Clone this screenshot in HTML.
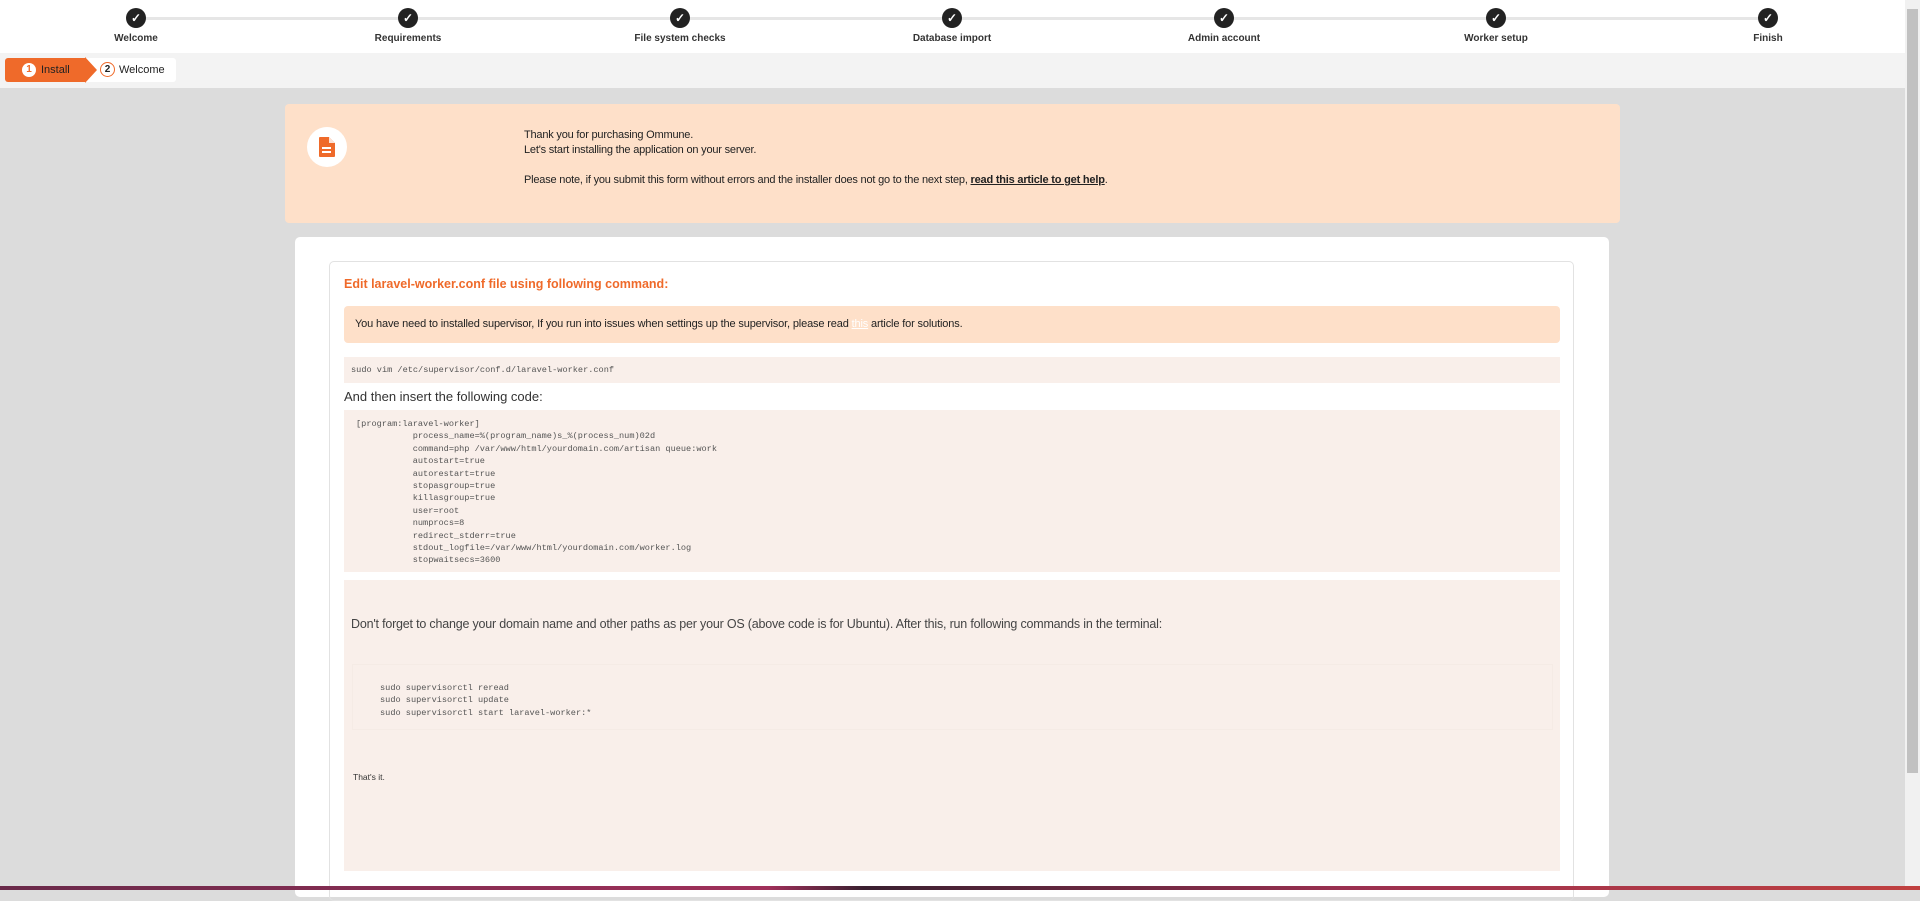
<!DOCTYPE html>
<html><head><meta charset="utf-8"><style>
*{margin:0;padding:0;box-sizing:border-box}
body{width:1920px;height:890px;overflow:hidden;background:#dcdcdc;font-family:"Liberation Sans",Arial,sans-serif;position:relative;color:#222}
.a{position:absolute}
.top{left:0;top:0;width:1905px;height:53px;background:#fff}
.line{left:136px;top:17px;width:1632px;height:3px;background:#e6e6e6}
.step{position:absolute;top:8px;width:160px;margin-left:-80px;text-align:center;font-size:10px;font-weight:bold;color:#333}
.step .c{width:20px;height:20px;border-radius:50%;background:#222;margin:0 auto 5px;color:#fff;font-size:12px;line-height:20px}
.crumb{left:0;top:53px;width:1905px;height:35px;background:#f3f3f3}
.mono{font-family:"Liberation Mono",monospace;color:#555}
</style></head><body>
<div class="a top"></div>
<div class="a line"></div>
<div class="step" style="left:136px"><div class="c">✓</div>Welcome</div>
<div class="step" style="left:408px"><div class="c">✓</div>Requirements</div>
<div class="step" style="left:680px"><div class="c">✓</div>File system checks</div>
<div class="step" style="left:952px"><div class="c">✓</div>Database import</div>
<div class="step" style="left:1224px"><div class="c">✓</div>Admin account</div>
<div class="step" style="left:1496px"><div class="c">✓</div>Worker setup</div>
<div class="step" style="left:1768px"><div class="c">✓</div>Finish</div>
<div class="a crumb"></div>
<div class="a" style="left:68px;top:58px;width:108px;height:24px;background:#fff;border-radius:3px"></div>
<div class="a" style="left:5px;top:58px;width:80px;height:24px;background:#ef6a2a;border-radius:3px 0 0 3px"></div>
<div class="a" style="left:85px;top:57px;width:0;height:0;border-top:13px solid transparent;border-bottom:13px solid transparent;border-left:12px solid #ef6a2a"></div>
<div class="a" style="left:22px;top:63px;width:14px;height:14px;border-radius:50%;background:#fff;color:#ef6a2a;font-size:10px;text-align:center;line-height:14px;font-weight:bold">1</div>
<div class="a" style="left:41px;top:64px;font-size:11px;color:#222">Install</div>
<div class="a" style="left:100px;top:62px;width:15px;height:15px;border-radius:50%;border:1px solid #ef6a2a;background:#fff;color:#222;font-size:10px;text-align:center;line-height:13px;font-weight:bold">2</div>
<div class="a" style="left:119px;top:64px;font-size:11px;color:#222">Welcome</div>

<div class="a" style="left:285px;top:104px;width:1335px;height:119px;background:#fee0c9;border-radius:4px"></div>
<div class="a" style="left:307px;top:127px;width:40px;height:40px;border-radius:50%;background:#fff"></div>
<svg class="a" style="left:319px;top:137px" width="16" height="20" viewBox="0 0 16 20"><path d="M0 1Q0 0 1 0H10L16 6V19Q16 20 15 20H1Q0 20 0 19Z" fill="#ef6a2a"/><path d="M10 0V6H16Z" fill="#fff" opacity=".8"/><rect x="3" y="10" width="9" height="2" fill="#fff"/><rect x="3" y="14" width="9" height="2" fill="#fff"/></svg>
<div class="a" style="left:524px;top:128px;font-size:11px;line-height:15px;color:#222;letter-spacing:-.2px">Thank you for purchasing Ommune.<br>Let's start installing the application on your server.<br><br>Please note, if you submit this form without errors and the installer does not go to the next step, <b style="text-decoration:underline">read this article to get help</b>.</div>

<div class="a" style="left:295px;top:237px;width:1314px;height:660px;background:#fff;border-radius:5px"></div>
<div class="a" style="left:329px;top:261px;width:1245px;height:640px;border:1px solid #e2e2e2;border-radius:5px"></div>
<div class="a" style="left:344px;top:277px;font-size:12.5px;font-weight:bold;color:#ef6a2a">Edit laravel-worker.conf file using following command:</div>
<div class="a" style="left:344px;top:306px;width:1216px;height:37px;background:#fee0c9;border-radius:4px;font-size:11px;padding:12px 11px;color:#222;letter-spacing:-.15px">You have need to installed supervisor, If you run into issues when settings up the supervisor, please read <span style="color:#fff;text-decoration:underline">this</span> article for solutions.</div>
<div class="a mono" style="left:344px;top:357px;width:1216px;height:26px;background:#f9efea;font-size:8.6px;padding:8px 7px">sudo vim /etc/supervisor/conf.d/laravel-worker.conf</div>
<div class="a" style="left:344px;top:389px;font-size:13px;color:#333">And then insert the following code:</div>
<div class="a mono" style="left:344px;top:410px;width:1216px;height:162px;background:#f9efea;font-size:8.6px;line-height:12.4px;padding:8px 12px;white-space:pre">[program:laravel-worker]
           process_name=%(program_name)s_%(process_num)02d
           command=php /var/www/html/yourdomain.com/artisan queue:work
           autostart=true
           autorestart=true
           stopasgroup=true
           killasgroup=true
           user=root
           numprocs=8
           redirect_stderr=true
           stdout_logfile=/var/www/html/yourdomain.com/worker.log
           stopwaitsecs=3600</div>
<div class="a" style="left:344px;top:580px;width:1216px;height:291px;background:#f9efea"></div>
<div class="a" style="left:351px;top:617px;font-size:12.5px;color:#444;letter-spacing:-.2px">Don't forget to change your domain name and other paths as per your OS (above code is for Ubuntu). After this, run following commands in the terminal:</div>
<div class="a" style="left:352px;top:664px;width:1201px;height:66px;border:1px solid #f5ebe5"></div>
<div class="a mono" style="left:380px;top:682px;font-size:8.6px;line-height:12.4px;white-space:pre">sudo supervisorctl reread
sudo supervisorctl update
sudo supervisorctl start laravel-worker:*</div>
<div class="a" style="left:353px;top:772px;font-size:8.5px;color:#333">That's it.</div>

<div class="a" style="left:0;top:886px;width:1920px;height:4px;background:linear-gradient(90deg,#6a2a4a,#a0305a 40%,#3a2030 45%,#9a3050 70%,#c04040)"></div>
<div class="a" style="left:1905px;top:0;width:15px;height:886px;background:#f1f1f1"></div>
<div class="a" style="left:1907px;top:9px;width:11px;height:764px;background:#c1c1c1"></div>
</body></html>
